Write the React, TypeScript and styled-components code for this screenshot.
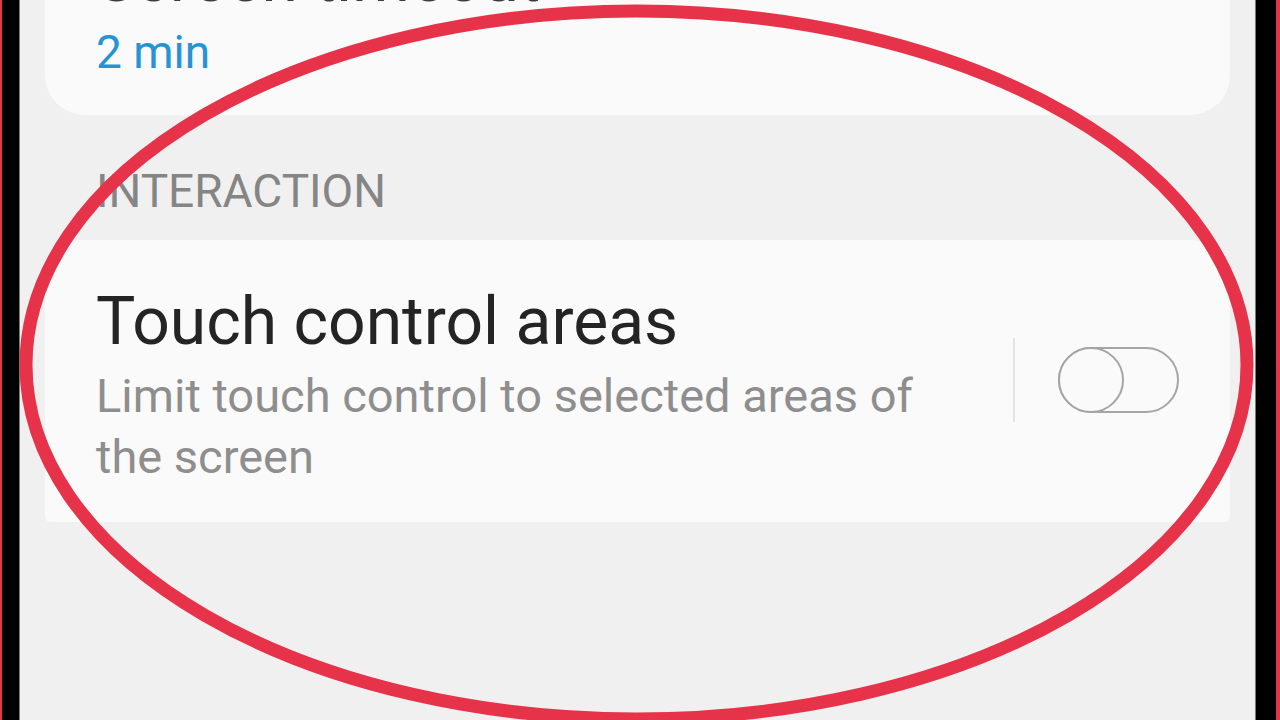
import styled, { createGlobalStyle } from "styled-components"
import { useState } from "react"

const GlobalStyle = createGlobalStyle`
    html, body {
        margin: 0;
        padding: 0;
        background: #000;
        font-family: Roboto, "Noto Sans", "Liberation Sans", sans-serif;
    }
`

const Frame = styled.div`
    position: relative;
    display: flex;
    width: 1280px;
    height: 720px;
    overflow: hidden;
`

const Bezel = styled.div<{ $side: "left" | "right" }>`
    flex: none;
    width: ${p => (p.$side === "left" ? "17px" : "20px")};
    background: #000;
    border-${p => (p.$side === "left" ? "left" : "right")}: ${p => (p.$side === "left" ? "2px" : "4px")} solid #e5354b;
    border-${p => (p.$side === "left" ? "right" : "left")}: 1px solid #7a7a7a;
`

const Screen = styled.div`
    flex: 1;
    display: flex;
    flex-direction: column;
    padding: 0 25px;
    background: #f0f0f0;
    overflow: hidden;
`

const Card = styled.div<{ $top?: boolean }>`
    background: #fafafa;
    border-radius: ${p => (p.$top ? "40px" : "40px 40px 6px 6px")};
    margin-top: ${p => (p.$top ? "-103px" : "0")};
`

const StackItem = styled.div`
    padding: 43px 51px 36px;
`

const Row = styled.div`
    display: flex;
    align-items: center;
    padding: 43px 51px 35px;
`

const TextBlock = styled.div`
    flex: 1;
    padding-right: 50px;
`

const Title = styled.div<{ $faded?: boolean }>`
    font-size: 66px;
    line-height: 78px;
    color: ${p => (p.$faded ? "#3c3c3c" : "#242424")};
`

const Value = styled.div`
    margin-top: 7px;
    font-size: 46px;
    line-height: 54px;
    color: #2694d2;
`

const Summary = styled.div`
    margin-top: 4px;
    font-size: 47px;
    line-height: 61px;
    color: #8e8e8e;
`

const SectionHeader = styled.div`
    margin: 49px 0 22px 51px;
    font-size: 46px;
    line-height: 54px;
    color: #858585;
`

const Controls = styled.div`
    display: flex;
    align-items: center;
    gap: 43px;
    margin-bottom: 10px;
`

const Divider = styled.div`
    width: 2px;
    height: 84px;
    background: #e4e4e4;
`

const Switch = styled.button<{ $on: boolean }>`
    position: relative;
    width: 121px;
    height: 66px;
    padding: 0;
    border: 2.5px solid #a5a5a5;
    border-radius: 33px;
    background: ${p => (p.$on ? "#3e91ff" : "transparent")};
    box-sizing: border-box;
    cursor: pointer;
`

const Thumb = styled.span<{ $on: boolean }>`
    position: absolute;
    top: -2.5px;
    left: ${p => (p.$on ? "52px" : "-2.5px")};
    width: 66px;
    height: 66px;
    border: 2.5px solid #a5a5a5;
    border-radius: 50%;
    background: #fafafa;
    box-sizing: border-box;
`

const Marker = styled.svg`
    position: absolute;
    left: 0;
    top: 0;
    pointer-events: none;
`

const App = () => {
    const [touchAreas, setTouchAreas] = useState(false)

    return (
        <>
            <GlobalStyle />
            <Frame>
                <Bezel $side="left" />
                <Screen>
                    <Card $top>
                        <StackItem>
                            <Title $faded>Screen timeout</Title>
                            <Value>2 min</Value>
                        </StackItem>
                    </Card>

                    <SectionHeader>INTERACTION</SectionHeader>

                    <Card>
                        <Row>
                            <TextBlock>
                                <Title>Touch control areas</Title>
                                <Summary>Limit touch control to selected areas of the screen</Summary>
                            </TextBlock>
                            <Controls>
                                <Divider />
                                <Switch $on={touchAreas} onClick={() => setTouchAreas(!touchAreas)}>
                                    <Thumb $on={touchAreas} />
                                </Switch>
                            </Controls>
                        </Row>
                    </Card>
                </Screen>
                <Bezel $side="right" />

                {/* red circle drawn around the setting */}
                <Marker width="1280" height="720" viewBox="0 0 1280 720">
                    <ellipse cx="636.5" cy="365" rx="610.5" ry="354" fill="none" stroke="#e6334a" strokeWidth="13" />
                </Marker>
            </Frame>
        </>
    )
}

export default App
